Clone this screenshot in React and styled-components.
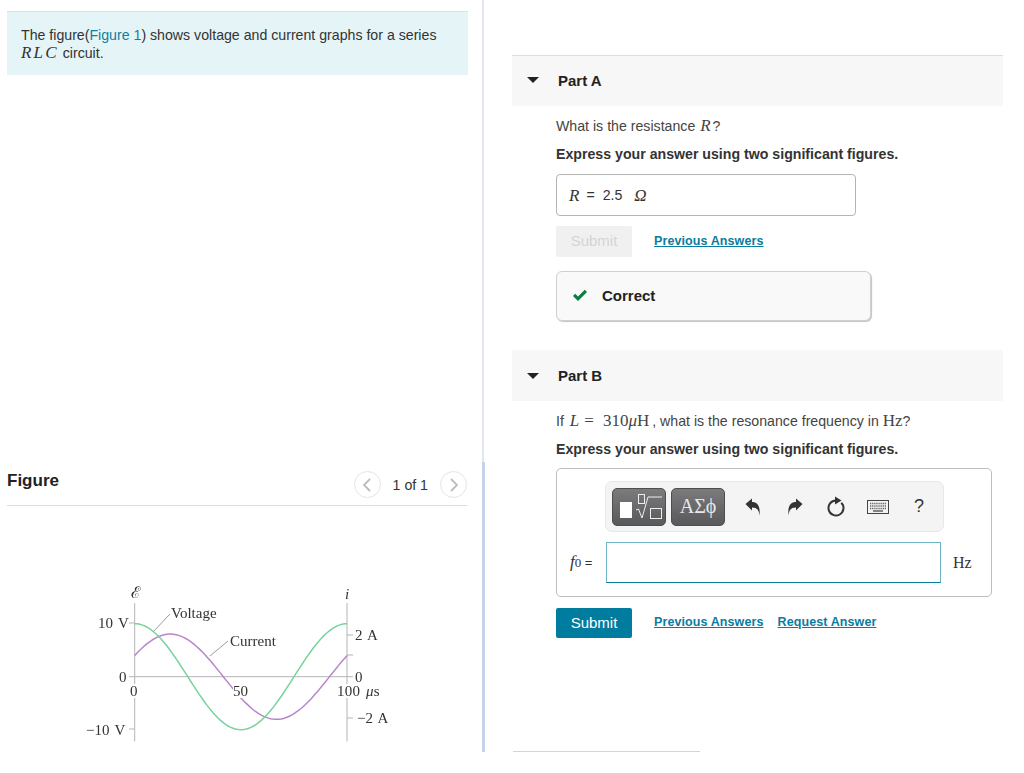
import React from "react";
import styled, { createGlobalStyle } from "styled-components";

const Global = createGlobalStyle`
  html, body { margin: 0; padding: 0; background: #fff; }
  body { font-family: "Liberation Sans", Arial, sans-serif; font-size: 14.17px; color: #333; }
  #root { width: 1024px; height: 773px; overflow: hidden; }
`;

const Page = styled.div`
  display: flex;
  width: 1024px;
  height: 773px;
`;
const LeftColumn = styled.div`
  width: 485px;
  flex: none;
  display: flex;
  flex-direction: column;
`;
const IntroPane = styled.div`
  height: 462px;
  box-sizing: border-box;
  padding: 11px 0 0 7px;
  border-right: 2px solid #e1e7ed;
  margin-right: 1px;
`;
const Intro = styled.div`
  width: 461px;
  height: 64px;
  box-sizing: border-box;
  background: #e5f5f7;
  border-top: 1px solid #d6e2e6;
  padding: 15px 14px 0;
  line-height: 17px;
`;
const Link = styled.a`
  color: #117e9e;
`;
const Math = styled.span`
  font-family: "Liberation Serif", "Times New Roman", serif;
  font-style: ${(p) => (p.$upright ? "normal" : "italic")};
  font-size: ${(p) => p.$size || 17}px;
  line-height: 1;
  letter-spacing: ${(p) => p.$spacing || 0}px;
  margin-left: ${(p) => p.$before || 0}px;
  margin-right: ${(p) => p.$after || 0}px;
`;
const FigurePane = styled.div`
  height: 290px;
  box-sizing: border-box;
  border-right: 3px solid #c4d4e6;
  padding: 0 15px 0 7px;
`;
const FigureHeader = styled.div`
  height: 44px;
  box-sizing: border-box;
  display: flex;
  align-items: center;
  justify-content: space-between;
  border-bottom: 1px solid #dcdcdc;
  padding-top: 1px;
`;
const FigureTitle = styled.h2`
  margin: 0 0 6px;
  font-size: 17px;
  line-height: 20px;
  font-weight: 700;
  color: #222;
`;
const Pager = styled.div`
  display: flex;
  align-items: center;
  gap: 12px;
  margin-top: 1px;
  color: #333;
`;
const PagerButton = styled.span`
  width: 27px;
  height: 27px;
  box-sizing: border-box;
  border: 1px solid #e4e4e4;
  border-radius: 50%;
  display: flex;
  align-items: center;
  justify-content: center;
`;
const GraphWrap = styled.div`
  margin: 64px 0 0 63px;
  width: 340px;
  height: 182px;
`;
const Graph = styled.svg`
  display: block;
  filter: blur(0.35px);
  font-family: "Liberation Serif", serif;
`;

const RightColumn = styled.div`
  margin-left: 27px;
  width: 491px;
  padding-top: 55px;
  display: flex;
  flex-direction: column;
`;
const PartHeader = styled.div`
  height: 51px;
  box-sizing: border-box;
  background: #f7f7f7;
  border-top: ${(p) => (p.$ruled ? "1px solid #dedede" : "none")};
  display: flex;
  align-items: center;
  padding: 0 0 ${(p) => (p.$ruled ? 2 : 0)}px 15px;
  gap: 19px;
  font-weight: 700;
  font-size: 15px;
  color: #222;
`;
const Caret = styled.span`
  width: 0;
  height: 0;
  border-left: 6px solid transparent;
  border-right: 6px solid transparent;
  border-top: 6px solid #222;
`;
const PartBody = styled.div`
  padding-left: 44px;
  display: flex;
  flex-direction: column;
  align-items: flex-start;
`;
const Question = styled.div`
  margin-top: 10px;
  height: 20px;
  line-height: 20px;
  color: #444;
`;
const Instruction = styled.div`
  margin-top: 8px;
  height: 20px;
  line-height: 20px;
  font-weight: 700;
  color: #333;
`;
const AnswerBox = styled.div`
  margin-top: 10px;
  width: 300px;
  height: 42px;
  box-sizing: border-box;
  border: 1px solid #b4b4b4;
  border-radius: 4px;
  display: flex;
  align-items: center;
  padding-left: 12px;
  gap: 6px;
`;
const AnswerValue = styled.span`
  margin: 0 6px 0 2px;
`;
const ActionRow = styled.div`
  margin-top: ${(p) => p.$top}px;
  display: flex;
  align-items: center;
`;
const SubmitButton = styled.button`
  width: 76px;
  height: ${(p) => (p.$disabled ? 31 : 30)}px;
  border: none;
  border-radius: 2px;
  padding: 0 0 2px;
  background: ${(p) => (p.$disabled ? "#f0f0f0" : "#007c9f")};
  color: ${(p) => (p.$disabled ? "#d4d4d4" : "#fff")};
  font: 15px "Liberation Sans", Arial, sans-serif;
`;
const AnswerLink = styled.a`
  margin: 0 0 2px ${(p) => p.$left}px;
  color: #0a7c9e;
  font-size: 12.5px;
  font-weight: 700;
  text-decoration: underline;
  letter-spacing: 0.1px;
`;
const Feedback = styled.div`
  margin-top: 14px;
  width: 315px;
  height: 50px;
  box-sizing: border-box;
  background: #f9f9f9;
  border: 1px solid #cfcfcf;
  border-radius: 6px;
  box-shadow: 1px 1px 1px #c4c4c4;
  display: flex;
  align-items: center;
  padding: 0 0 2px 15px;
  gap: 14px;
  font-weight: 700;
  font-size: 15px;
  color: #222;
`;
const Gap = styled.div`
  height: 29px;
  flex: none;
`;
const EditorBox = styled.div`
  margin-top: 9px;
  width: 436px;
  height: 129px;
  box-sizing: border-box;
  border: 1px solid #bdbdbd;
  border-radius: 5px;
  padding: 12px 0 0 48px;
`;
const Toolbar = styled.div`
  width: 339px;
  height: 51px;
  box-sizing: border-box;
  background: #f4f4f4;
  border: 1px solid #e8e8e8;
  border-radius: 7px;
  display: flex;
  align-items: center;
  padding-left: 6px;
`;
const ToolButton = styled.button`
  width: 54px;
  height: 38px;
  margin-right: 5px;
  padding: 0;
  border: 1px solid #4e4e4e;
  border-radius: 5px;
  background: linear-gradient(#7b7b7d, #59595b);
  color: #e8e8e8;
  font: 20px "Liberation Serif", serif;
  display: flex;
  align-items: center;
  justify-content: center;
`;
const ToolIcon = styled.span`
  width: ${(p) => p.$width}px;
  display: flex;
  justify-content: center;
  font-size: 18px;
  color: #333;
`;
const FormulaRow = styled.div`
  margin: 10px 0 0 -35px;
  display: flex;
  align-items: center;
`;
const FormulaLabel = styled.div`
  width: 36px;
  font-size: 13px;
  margin-top: -2px;
`;
const FormulaInput = styled.div`
  width: 335px;
  height: 41px;
  box-sizing: border-box;
  border: 1px solid #6db4c9;
  border-bottom-color: #087d9f;
  background: #fff;
`;
const Unit = styled.div`
  margin-left: 12px;
`;
const FooterRule = styled.div`
  margin: 113px 0 0 1px;
  width: 187px;
  border-top: 1px solid #d4d4d4;
`;

const W = 212.4;
const X0 = 64.7;
const wave = (amp, phase) => {
  const pts = [];
  for (let i = 0; i <= 100; i += 1) {
    const x = X0 + (i / 100) * W;
    const y = 106.7 - amp * globalThis.Math.cos(2 * globalThis.Math.PI * (i / 100) - phase);
    pts.push(`${x.toFixed(1)},${y.toFixed(1)}`);
  }
  return pts.join(" ");
};

const Chevron = ({ right }) => (
  <svg width="10" height="14" viewBox="0 0 10 14" fill="none" stroke="#bdbdbd" strokeWidth="1.8">
    <path d={right ? "M2 1l6 6-6 6" : "M8 1L2 7l6 6"} />
  </svg>
);

const Check = () => (
  <svg width="16" height="13" viewBox="0 0 16 13">
    <path d="M1 7l2.2-2.2L6 7.6 12.8.8 15 3 6 12z" fill="#0a7f3f" />
  </svg>
);

const Undo = () => (
  <svg width="16" height="18" viewBox="0 0 16 18">
    <path d="M0.5 6L7 0.5V4C12.5 4 15.5 8 14.5 17.5C14 12 12 9.5 7 9.5V12.5Z" fill="#333" />
  </svg>
);

const Redo = () => (
  <svg width="16" height="18" viewBox="0 0 16 18">
    <path d="M15.5 6L9 0.5V4C3.5 4 0.5 8 1.5 17.5C2 12 4 9.5 9 9.5V12.5Z" fill="#333" />
  </svg>
);

const Reset = () => (
  <svg width="20" height="22" viewBox="0 0 20 22" fill="none">
    <path d="M15.3 6.7A7.5 7.5 0 1 1 10 4.5" stroke="#333" strokeWidth="2" />
    <path d="M9 0.5L15.5 4.5L9 8.5Z" fill="#333" />
  </svg>
);

const Keyboard = () => (
  <svg width="22" height="14" viewBox="0 0 22 14">
    <rect x="0.5" y="0.5" width="21" height="13" fill="#f4f4f4" stroke="#444" />
    <path d="M3 3.5h16M3 6h16M3 8.5h16" stroke="#666" strokeWidth="1.3" strokeDasharray="1.3 0.8" />
    <path d="M6 11h10" stroke="#555" strokeWidth="1.4" />
  </svg>
);

const Radical = () => (
  <svg width="52" height="36" viewBox="0 0 52 36" fill="none">
    <rect x="7" y="13" width="12" height="16" fill="#fff" />
    <rect x="25.5" y="5.5" width="6" height="9" stroke="#eee" />
    <path d="M23 21l2.5-1 3.5 9 6-21h14" stroke="#eee" strokeWidth="1" />
    <rect x="37.5" y="19.5" width="11" height="10" stroke="#eee" />
  </svg>
);

export default function App() {
  return (
    <Page>
      <Global />
      <LeftColumn>
        <IntroPane>
          <Intro>
            The figure(<Link>Figure 1</Link>) shows voltage and current graphs for a series{" "}
            <br />
            <Math $spacing={2.2}>RLC</Math> circuit.
          </Intro>
        </IntroPane>
        <FigurePane>
          <FigureHeader>
            <FigureTitle>Figure</FigureTitle>
            <Pager>
              <PagerButton><Chevron /></PagerButton>
              <span>1 of 1</span>
              <PagerButton><Chevron right /></PagerButton>
            </Pager>
          </FigureHeader>
          <GraphWrap>
            <Graph width="340" height="182" viewBox="0 0 340 182">
              <g stroke="#b4b4b4" fill="none" strokeWidth="1">
                <path d="M64.7 33V171.5M277 33V171.5M64.7 106.7H277" />
                <path d="M59 53H64.7M59 159H64.7M59 106.7H64.7M277 65H283M277 85H283M277 106.7H283M277 148H283" />
                <path d="M83 62L100 44M140 86L158 71" stroke="#9a9a9a" />
              </g>
              <polyline points={wave(42.6, 1.05)} fill="none" stroke="#b985c9" strokeWidth="1.5" />
              <polyline points={wave(53, 0)} fill="none" stroke="#78d29b" strokeWidth="1.5" />
              <g fill="#fff">
                <rect x="58" y="114" width="14" height="14" />
                <rect x="163" y="114" width="18" height="14" />
                <rect x="266" y="114" width="22" height="14" />
              </g>
              <g fontSize="15" fill="#333">
                <text x="61" y="28" fontSize="16">ℰ</text>
                <text x="275" y="29" fontStyle="italic">i</text>
                <text x="101" y="48">Voltage</text>
                <text x="160" y="76">Current</text>
                <text x="28" y="58" wordSpacing="1.5">10 V</text>
                <text x="49" y="112">0</text>
                <text x="60" y="126">0</text>
                <text x="163" y="126">50</text>
                <text x="16" y="165" wordSpacing="1.5">−10 V</text>
                <text x="267" y="126" wordSpacing="1.5" letterSpacing="0.3">100 <tspan fontStyle="italic">μ</tspan>s</text>
                <text x="285" y="70" wordSpacing="1.5">2 A</text>
                <text x="285" y="112">0</text>
                <text x="287" y="153" wordSpacing="1.5">−2 A</text>
              </g>
            </Graph>
          </GraphWrap>
        </FigurePane>
      </LeftColumn>
      <RightColumn>
        <PartHeader $ruled><Caret />Part A</PartHeader>
        <PartBody>
          <Question>What is the resistance <Math $before={1} $spacing={2}>R</Math>?</Question>
          <Instruction>Express your answer using two significant figures.</Instruction>
          <AnswerBox>
            <Math $spacing={1}>R</Math>=<AnswerValue>2.5</AnswerValue><Math>Ω</Math>
          </AnswerBox>
          <ActionRow $top={10}>
            <SubmitButton $disabled>Submit</SubmitButton>
            <AnswerLink $left={22}>Previous Answers</AnswerLink>
          </ActionRow>
          <Feedback><Check />Correct</Feedback>
        </PartBody>
        <Gap />
        <PartHeader><Caret />Part B</PartHeader>
        <PartBody>
          <Question>
            If <Math $before={2}>L</Math><Math $upright $before={5} $after={9}>=</Math><Math $upright>310</Math><Math>μ</Math><Math $upright $after={3}>H</Math>, what is the resonance frequency in <Math $upright>Hz</Math>?
          </Question>
          <Instruction>Express your answer using two significant figures.</Instruction>
          <EditorBox>
            <Toolbar>
              <ToolButton><Radical /></ToolButton>
              <ToolButton>ΑΣϕ</ToolButton>
              <ToolIcon $width={45}><Undo /></ToolIcon>
              <ToolIcon $width={39}><Redo /></ToolIcon>
              <ToolIcon $width={44}><Reset /></ToolIcon>
              <ToolIcon $width={40}><Keyboard /></ToolIcon>
              <ToolIcon $width={42}>?</ToolIcon>
            </Toolbar>
            <FormulaRow>
              <FormulaLabel><Math>f</Math><Math $upright $size={13}>0</Math> =</FormulaLabel>
              <FormulaInput />
              <Unit><Math $upright $size={16}>Hz</Math></Unit>
            </FormulaRow>
          </EditorBox>
          <ActionRow $top={11}>
            <SubmitButton>Submit</SubmitButton>
            <AnswerLink $left={22}>Previous Answers</AnswerLink>
            <AnswerLink $left={14}>Request Answer</AnswerLink>
          </ActionRow>
        </PartBody>
        <FooterRule />
      </RightColumn>
    </Page>
  );
}
